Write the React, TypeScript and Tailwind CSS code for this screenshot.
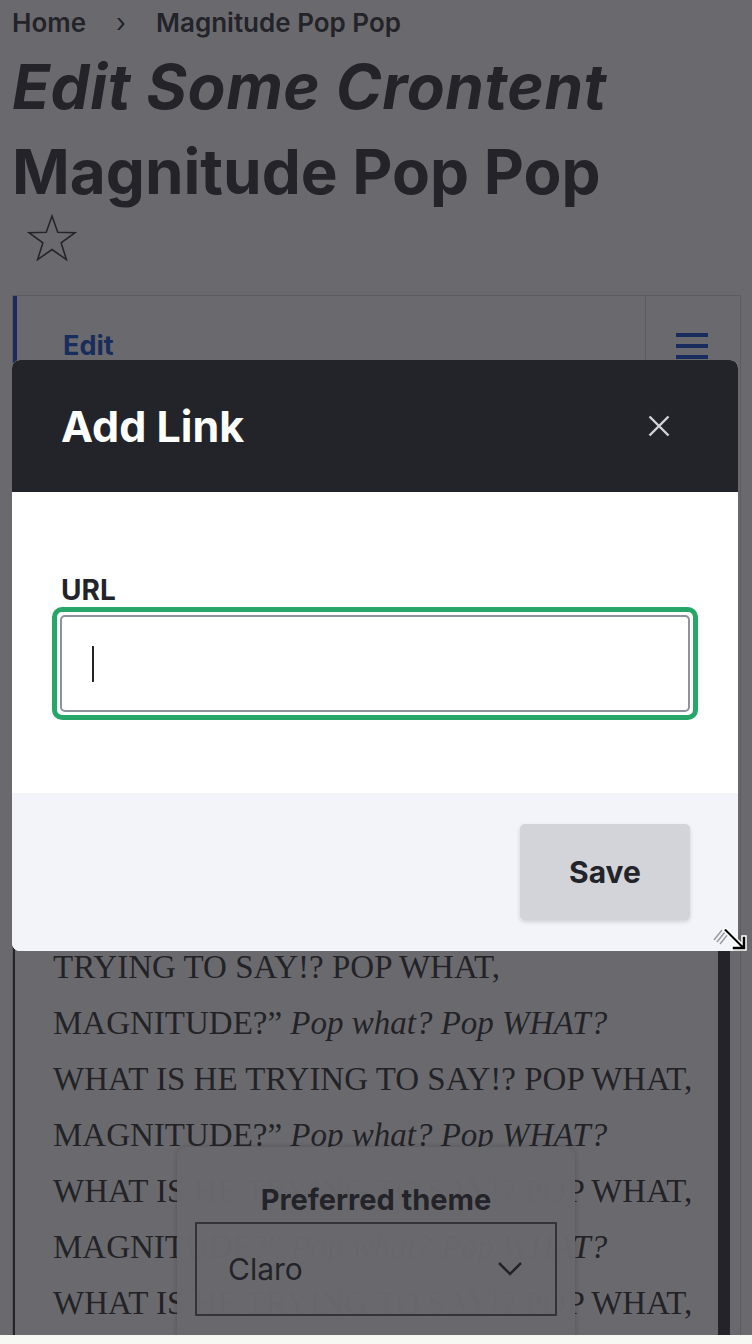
import React from "react";

const serif = "font-['Liberation_Serif','Times_New_Roman',serif]";

function TextLine({ children }: { children: React.ReactNode }) {
  return <div className="h-[56px] leading-[56px] whitespace-nowrap">{children}</div>;
}

export default function App() {
  return (
    <div className="relative w-[752px] h-[1344px] overflow-hidden bg-white font-['Inter','Liberation_Sans',sans-serif] text-[#232429]">
      {/* Page */}
      <div className="flex flex-col">
        <nav className="h-[44px] px-3 flex items-center gap-[30px] text-[26px] font-semibold">
          <span>Home</span>
          <span className="font-normal">›</span>
          <span>Magnitude Pop Pop</span>
        </nav>
        <h1 className="px-3 text-[62px] leading-[85px] font-bold">
          <em className="tracking-[0.6px]">Edit Some Crontent</em>
          <br />
          Magnitude Pop Pop
        </h1>
        <div className="h-[81px] pl-[27px] flex items-start">
          <svg width="50" height="48" viewBox="0 0 52 50" fill="none">
            <path
              d="M26 2 L32 19 L50 19.5 L35.5 30 L41 47.5 L26 37 L11 47.5 L16.5 30 L2 19.5 L20 19 Z"
              stroke="#232429"
              strokeWidth="1.6"
              strokeLinejoin="miter"
            />
          </svg>
        </div>
        <div className="mx-3 w-[729px] border border-[#d3d4d9] flex flex-col">
          <div className="h-[100px] flex border-l-4 border-[#003ecc]">
            <div className="flex-1 flex items-center pl-[46px] text-[27px] font-bold text-[#003ecc]">Edit</div>
            <div className="w-[95px] border-l border-[#d3d4d9] flex flex-col items-center justify-center gap-[7px] pr-[2px]">
              <div className="w-[32px] h-[4px] bg-[#003ecc]" />
              <div className="w-[32px] h-[4px] bg-[#003ecc]" />
              <div className="w-[32px] h-[4px] bg-[#003ecc]" />
            </div>
          </div>
          <div className="flex h-[1000px] border-l-2 border-[#232429]">
            <div className={`flex-1 pl-[38px] pt-[487px] text-[33px] text-[#222] ${serif}`}>
              <TextLine>
                <em>Pop what? Pop WHAT?</em> WHAT IS HE
              </TextLine>
              <TextLine>TRYING TO SAY!? POP WHAT,</TextLine>
              <TextLine>
                MAGNITUDE?” <em>Pop what? Pop WHAT?</em>
              </TextLine>
              <TextLine>WHAT IS HE TRYING TO SAY!? POP WHAT,</TextLine>
              <TextLine>
                MAGNITUDE?” <em>Pop what? Pop WHAT?</em>
              </TextLine>
              <TextLine>WHAT IS HE TRYING TO SAY!? POP WHAT,</TextLine>
              <TextLine>
                MAGNITUDE?” <em>Pop what? Pop WHAT?</em>
              </TextLine>
              <TextLine>WHAT IS HE TRYING TO SAY!? POP WHAT,</TextLine>
            </div>
            <div className="w-[12px] bg-[#232429]" />
            <div className="w-[10px]" />
          </div>
        </div>
      </div>

      {/* Preferred theme widget */}
      <div className="absolute left-[177px] top-[1147px] w-[398px] h-[220px] rounded-[10px] bg-[rgba(252,252,252,0.97)] shadow-[0_0_6px_rgba(0,0,0,0.25)] flex flex-col items-center pt-[36px]">
        <div className="text-[29px] font-bold leading-[34px]">Preferred theme</div>
        <div className="mt-[5px] w-[362px] h-[94px] border-2 border-[#55565f] flex items-center justify-between pl-[31px] pr-[32px]">
          <span className="text-[30px]">Claro</span>
          <svg width="26" height="16" viewBox="0 0 26 16" fill="none">
            <path d="M2 2 L13 13 L24 2" stroke="#232429" strokeWidth="2.5" />
          </svg>
        </div>
      </div>

      {/* Overlay */}
      <div className="absolute inset-0 bg-[#232429]/[0.68]" />

      {/* bottom strip */}
      <div className="absolute left-0 bottom-0 w-full h-[9px] bg-[#f7f7f4]" />

      {/* Dialog */}
      <div className="absolute left-[12px] top-[360px] w-[726px] h-[591px] rounded-[8px] overflow-hidden flex flex-col bg-white">
        <div className="h-[132px] bg-[#232429] flex items-center justify-between pl-[49px] pr-[68px]">
          <span className="text-white text-[43px] font-bold">Add Link</span>
          <svg width="22" height="22" viewBox="0 0 22 22" fill="none">
            <path d="M1.5 1.5 L20.5 20.5 M20.5 1.5 L1.5 20.5" stroke="#d3d4d9" strokeWidth="2.4" />
          </svg>
        </div>
        <div className="h-[301px] bg-white px-[40px] pt-[82px]">
          <label className="block pl-[9px] text-[28px] font-bold leading-[32px]">URL</label>
          <div className="mt-[1px] rounded-[10px] border-[5px] border-[#26a769] p-[3px]">
            <div className="h-[97px] rounded-[5px] border-2 border-[#8e929c] flex items-center pl-[30px]">
              <div className="w-[2px] h-[36px] bg-[#232429]" />
            </div>
          </div>
        </div>
        <div className="flex-1 bg-[#f3f4f9] flex items-start justify-end pt-[31px] pr-[48px]">
          <button className="w-[170px] h-[96px] rounded-[5px] bg-[#d3d4d9] shadow-[0_2px_4px_rgba(0,0,0,0.15)] text-[30px] font-bold text-[#232429]">
            Save
          </button>
        </div>
      </div>

      {/* resize handle + cursor */}
      <svg className="absolute left-[708px] top-[920px]" width="44" height="34" viewBox="0 0 44 34" fill="none">
        <path d="M6 20 L14 10 M9 22 L17 12 M12 24 L20 14" stroke="#9a9ba3" strokeWidth="1.5" />
        <path d="M18 8 L34 24 L34 16 L38 16 L38 30 L24 30 L24 26 L31 26 L15 10 Z" fill="#000" stroke="#fff" strokeWidth="1.5" />
      </svg>
    </div>
  );
}
